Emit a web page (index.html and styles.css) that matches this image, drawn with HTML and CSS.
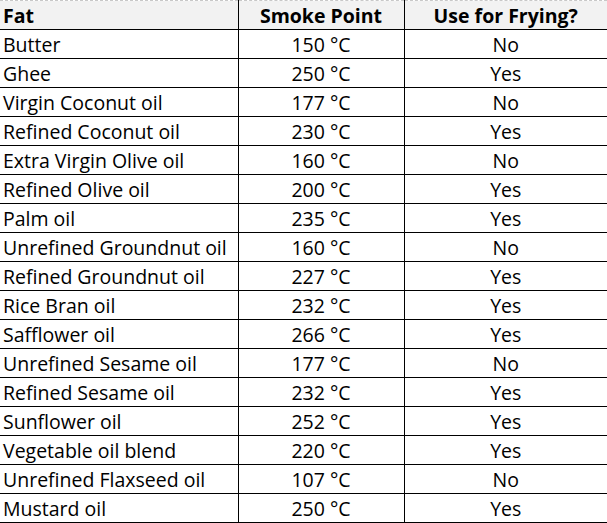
FILE: index.html
```html
<!DOCTYPE html>
<html>
<head>
<meta charset="utf-8">
<link rel="stylesheet" href="styles.css">
</head>
<body>
<table class="fats">
<colgroup><col class="c1"><col class="c2"><col class="c3"></colgroup>
<thead>
<tr><th class="name">Fat</th><th>Smoke Point</th><th>Use for Frying?</th></tr>
</thead>
<tbody>
<tr><td class="name">Butter</td><td>150 °C</td><td>No</td></tr>
<tr><td class="name">Ghee</td><td>250 °C</td><td>Yes</td></tr>
<tr><td class="name">Virgin Coconut oil</td><td>177 °C</td><td>No</td></tr>
<tr><td class="name">Refined Coconut oil</td><td>230 °C</td><td>Yes</td></tr>
<tr><td class="name">Extra Virgin Olive oil</td><td>160 °C</td><td>No</td></tr>
<tr><td class="name">Refined Olive oil</td><td>200 °C</td><td>Yes</td></tr>
<tr><td class="name">Palm oil</td><td>235 °C</td><td>Yes</td></tr>
<tr><td class="name">Unrefined Groundnut oil</td><td>160 °C</td><td>No</td></tr>
<tr><td class="name">Refined Groundnut oil</td><td>227 °C</td><td>Yes</td></tr>
<tr><td class="name">Rice Bran oil</td><td>232 °C</td><td>Yes</td></tr>
<tr><td class="name">Safflower oil</td><td>266 °C</td><td>Yes</td></tr>
<tr><td class="name">Unrefined Sesame oil</td><td>177 °C</td><td>No</td></tr>
<tr><td class="name">Refined Sesame oil</td><td>232 °C</td><td>Yes</td></tr>
<tr><td class="name">Sunflower oil</td><td>252 °C</td><td>Yes</td></tr>
<tr><td class="name">Vegetable oil blend</td><td>220 °C</td><td>Yes</td></tr>
<tr><td class="name">Unrefined Flaxseed oil</td><td>107 °C</td><td>No</td></tr>
<tr><td class="name">Mustard oil</td><td>250 °C</td><td>Yes</td></tr>
</tbody>
</table>
</body>
</html>
```
FILE: styles.css
```css
html, body {
  margin: 0;
  padding: 0;
  background: #ffffff;
}
.fats {
  border-collapse: collapse;
  table-layout: fixed;
  width: 607px;
  font-family: "Open Sans", "Noto Sans", sans-serif;
  font-size: 19.5px;
  color: #000;
}
.c1 { width: 238px; }
.c2 { width: 166px; }
.c3 { width: 203px; }
.fats th, .fats td {
  height: 29px;
  box-sizing: border-box;
  padding: 0 0 1px 0;
  line-height: 24px;
  vertical-align: bottom;
  text-align: center;
  border-bottom: 1px solid #000;
  border-left: 1px solid #000;
  white-space: nowrap;
  overflow: hidden;
}
.fats th {
  background: #f2f2f2;
  font-weight: 700;
  border-top: 1px dashed #c8c8c8;
}
.fats .name {
  text-align: left;
  padding-left: 3px;
  border-left: none;
}
```
